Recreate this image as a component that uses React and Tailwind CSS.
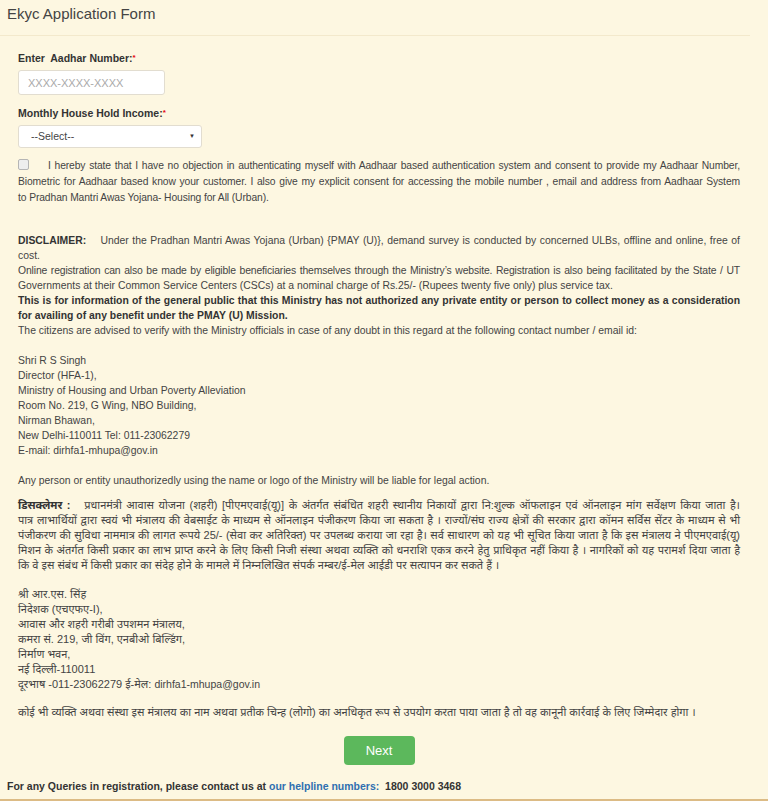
import React from 'react';

const Line = ({ children, last, className = '' }) => (
  <span className={(last ? 'block ' : 'block text-justify [text-align-last:justify] ') + className}>{children}</span>
);

const App = () => {
  return (
    <div
      className="min-h-[801px] bg-[#fdf7e1] text-[#333] text-[10.5px] leading-[15px]"
      style={{ fontFamily: '"Liberation Sans", Arial, "Noto Sans Devanagari", "Noto Sans", sans-serif' }}
    >
      <div className="w-[750px] h-[36px] border-b border-[#f3e9cc] pl-[7px] pt-[5px]">
        <h1 className="text-[15px] leading-[18px] text-[#444]">Ekyc Application Form</h1>
      </div>

      <div className="pl-[18px] pr-[28px]">
        <label className="block mt-[14px] font-bold leading-[16px] text-[#333]">
          Enter&nbsp; Aadhar Number:<span className="text-red-600 text-[8px] align-top">*</span>
        </label>
        <input
          type="text"
          placeholder="XXXX-XXXX-XXXX"
          className="block mt-[4px] w-[147px] h-[25px] bg-white border border-[#e2ddd0] rounded-[3px] px-[9px] text-[11px] placeholder:text-[#aaa] outline-none"
        />

        <label className="block mt-[10px] font-bold leading-[16px] text-[#333]">
          Monthly House Hold Income:<span className="text-red-600 text-[8px] align-top">*</span>
        </label>
        <div className="mt-[4px] w-[184px] h-[23px] bg-white border border-[#e2ddd0] rounded-[3px] flex items-center justify-between pl-[12px] pr-[6px] text-[#444]">
          <span>--Select--</span>
          <span className="text-[6px] text-[#333]">▼</span>
        </div>

        <div className="mt-[10px] leading-[16px] text-[#444] text-[10.3px] tracking-[-0.1px]">
          <Line>
            <span className="inline-block align-[-1px] w-[11px] h-[11px] border border-[#b5b5b5] rounded-[2px] bg-[#eee] mr-[19px]"></span>
            I hereby state that I have no objection in authenticating myself with Aadhaar based authentication system and consent to provide my Aadhaar Number,
          </Line>
          <Line>Biometric for Aadhaar based know your customer. I also give my explicit consent for accessing the mobile number , email and address from Aadhaar System</Line>
          <Line last>to Pradhan Mantri Awas Yojana- Housing for All (Urban).</Line>
        </div>

        <div className="mt-[27px] text-[#444] text-[10.4px]">
          <Line>
            <b className="text-[#333]">DISCLAIMER:</b>&nbsp;&nbsp;&nbsp; Under the Pradhan Mantri Awas Yojana (Urban) {'{'}PMAY (U){'}'}, demand survey is conducted by concerned ULBs, offline and online, free of
          </Line>
          <Line last>cost.</Line>
          <Line className="tracking-[-0.15px]">Online registration can also be made by eligible beneficiaries themselves through the Ministry’s website. Registration is also being facilitated by the State / UT</Line>
          <Line last>Governments at their Common Service Centers (CSCs) at a nominal charge of Rs.25/- (Rupees twenty five only) plus service tax.</Line>
          <div className="font-bold text-[#333]">
            <Line>This is for information of the general public that this Ministry has not authorized any private entity or person to collect money as a consideration</Line>
            <Line last>for availing of any benefit under the PMAY (U) Mission.</Line>
          </div>
          <p>The citizens are advised to verify with the Ministry officials in case of any doubt in this regard at the following contact number / email id:</p>

          <p className="mt-[15px]">
            Shri R S Singh<br />
            Director (HFA-1),<br />
            Ministry of Housing and Urban Poverty Alleviation<br />
            Room No. 219, G Wing, NBO Building,<br />
            Nirman Bhawan,<br />
            New Delhi-110011 Tel: 011-23062279<br />
            E-mail: dirhfa1-mhupa@gov.in
          </p>

          <p className="mt-[15px]">Any person or entity unauthorizedly using the name or logo of the Ministry will be liable for legal action.</p>

          <div className="mt-[10px] text-[11px]">
            <Line>
              <b className="text-[#333]">डिसक्लेमर :</b>&nbsp;&nbsp; प्रधानमंत्री आवास योजना (शहरी) [पीएमएवाई(यू)] के अंतर्गत संबंधित शहरी स्थानीय निकायों द्वारा नि:शुल्क ऑफलाइन एवं ऑनलाइन मांग सर्वेक्षण किया जाता है।
            </Line>
            <Line>पात्र लाभार्थियों द्वारा स्वयं भी मंत्रालय की वेबसाईट के माध्यम से ऑनलाइन पंजीकरण किया जा सकता है । राज्यों/संघ राज्य क्षेत्रों की सरकार द्वारा कॉमन सर्विस सेंटर के माध्यम से भी</Line>
            <Line>पंजीकरण की सुविधा नाममात्र की लागत रूपये 25/- (सेवा कर अतिरिक्त) पर उपलब्ध कराया जा रहा है। सर्व साधारण को यह भी सूचित किया जाता है कि इस मंत्रालय ने पीएमएवाई(यू)</Line>
            <Line>मिशन के अंतर्गत किसी प्रकार का लाभ प्राप्त करने के लिए किसी निजी संस्था अथवा व्यक्ति को धनराशि एकत्र करने हेतु प्राधिकृत नहीं किया है । नागरिकों को यह परामर्श दिया जाता है</Line>
            <Line last>कि वे इस संबंध में किसी प्रकार का संदेह होने के मामले में निम्नलिखित संपर्क नम्बर/ई-मेल आईडी पर सत्यापन कर सकते हैं ।</Line>

            <p className="mt-[14px]">
              श्री आर.एस. सिंह<br />
              निदेशक (एचएफए-I),<br />
              आवास और शहरी गरीबी उपशमन मंत्रालय,<br />
              कमरा सं. 219, जी विंग, एनबीओ बिल्डिंग,<br />
              निर्माण भवन,<br />
              नई दिल्ली-110011<br />
              दूरभाष -011-23062279 ई-मेल: <span className="text-[10.5px]">dirhfa1-mhupa@gov.in</span>
            </p>

            <p className="mt-[13px]">
              कोई भी व्यक्ति अथवा संस्था इस मंत्रालय का नाम अथवा प्रतीक चिन्ह (लोगो) का अनधिकृत रूप से उपयोग करता पाया जाता है तो वह कानूनी कार्रवाई के लिए जिम्मेदार होगा ।
            </p>
          </div>
        </div>

        <div className="flex justify-center mt-[16px]">
          <button className="w-[71px] h-[29px] rounded-[4px] bg-[#5cb85c] text-white text-[13px]">Next</button>
        </div>
      </div>

      <div className="mt-[14px] pl-[7px] pb-[5px] border-b-2 border-[#dcbb85] font-bold text-[#333]">
        For any Queries in registration, please contact us at <span className="text-[#2f6fb0]">our helpline numbers:</span>&nbsp; 1800 3000 3468
      </div>
    </div>
  );
};

export default App;
